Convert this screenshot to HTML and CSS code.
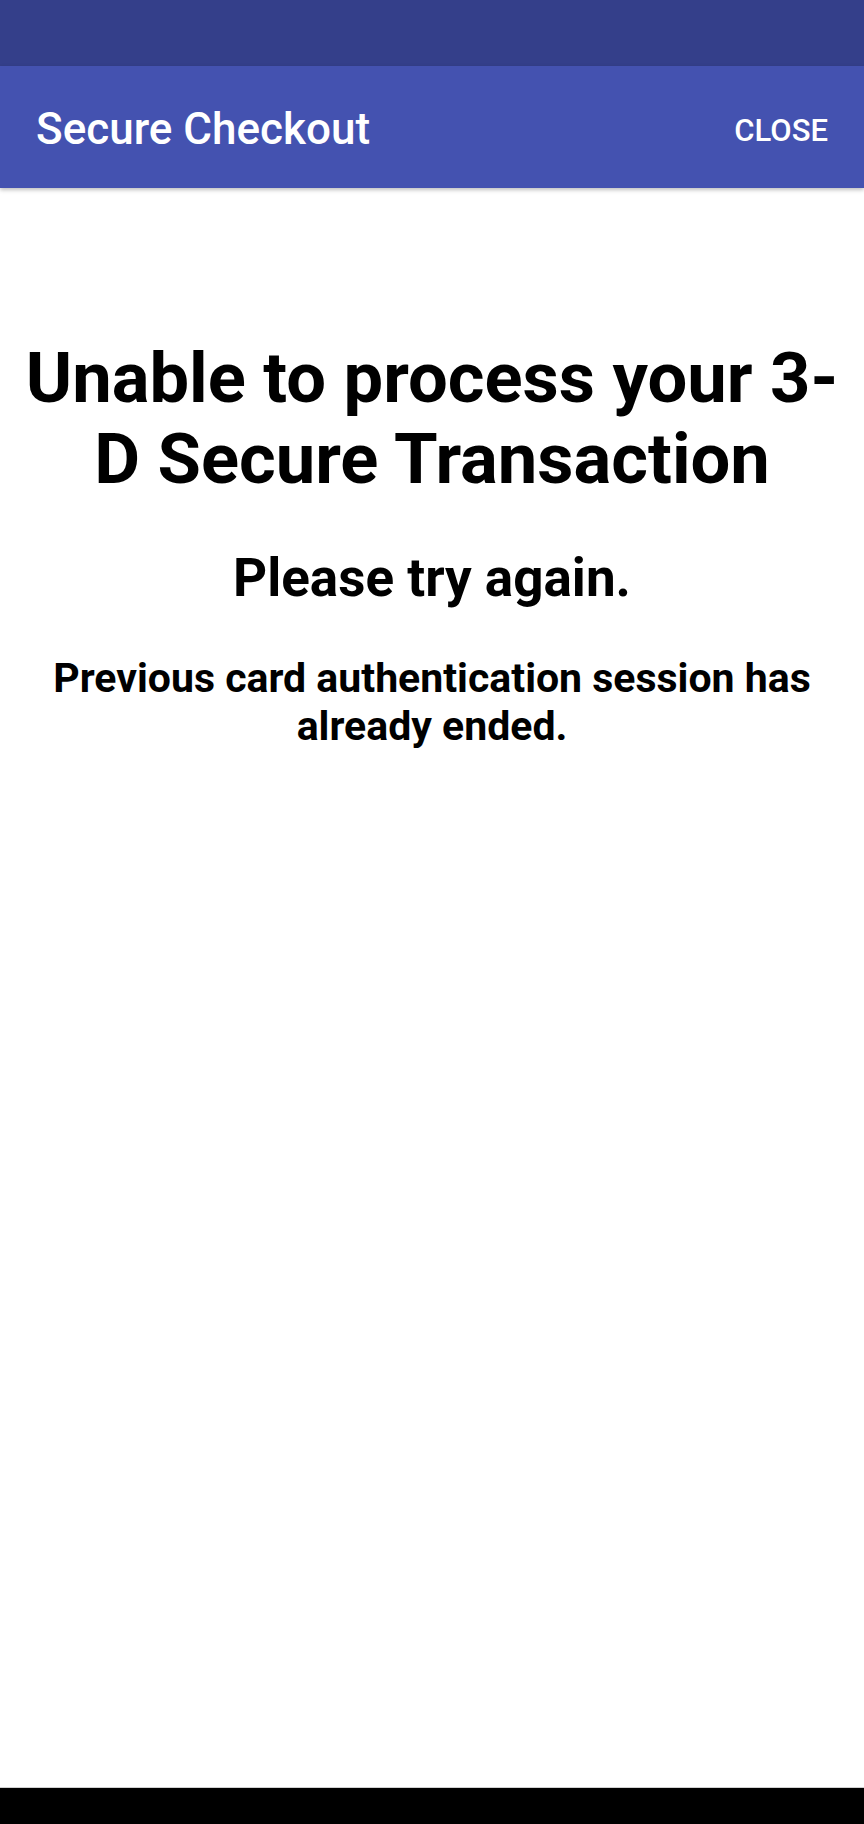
FILE: index.html
```html
<!DOCTYPE html>
<html lang="en">
<head>
  <meta charset="UTF-8">
  <meta name="viewport" content="width=device-width, initial-scale=1.0">
  <link rel="stylesheet" href="styles.css">
  <title>Secure Checkout</title>
</head>
<body>
  <div class="app">
    <div class="status-bar"></div>
    <div class="toolbar">
      <span class="toolbar-title">Secure Checkout</span>
      <span class="toolbar-action">CLOSE</span>
    </div>
    <div class="content">
      <h1>Unable to process your 3-D Secure Transaction</h1>
      <h2>Please try again.</h2>
      <p>Previous card authentication session has already ended.</p>
    </div>
    <div class="nav-bar"></div>
  </div>
</body>
</html>
```

FILE: styles.css
```css
html, body {
  margin: 0;
  padding: 0;
  height: 100%;
}

body {
  background-color: #fff;
  color: #000;
  font-family: Roboto, "Noto Sans", Arial, sans-serif;
}

.app {
  display: flex;
  flex-direction: column;
  height: 1824px;
}

.status-bar {
  height: 66px;
  background-color: #343f8a;
}

.toolbar {
  height: 122px;
  display: flex;
  align-items: center;
  justify-content: space-between;
  padding: 0 36px;
  background-color: #4452b0;
  color: #fff;
  box-shadow: 0 2px 4px rgba(0, 0, 0, 0.25);
  position: relative;
  z-index: 1;
}

.toolbar-title {
  font-size: 44px;
  font-weight: 500;
  margin-top: 4px;
}

.toolbar-action {
  font-size: 31px;
  font-weight: 500;
  margin-top: 6px;
}

.content {
  flex: 1;
  text-align: center;
  padding: 150px 20px 0;
}

h1 {
  font-size: 70.5px;
  font-weight: 700;
  line-height: 81px;
  margin: 0;
}

h2 {
  font-size: 53px;
  font-weight: 700;
  line-height: 62px;
  margin: 47px 0 0;
}

p {
  font-size: 41px;
  font-weight: 700;
  line-height: 48px;
  margin: 45px 0 0;
}

.nav-bar {
  height: 36px;
  background-color: #000;
  border-top: 1px solid #d0d0d0;
}
```
